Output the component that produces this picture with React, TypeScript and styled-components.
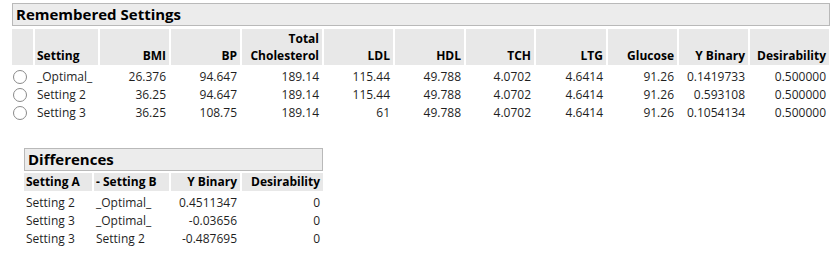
import React from "react";
import styled, { createGlobalStyle } from "styled-components";

const Global = createGlobalStyle`
  html, body { margin: 0; padding: 0; background: #ffffff; }
  body { font-family: "Open Sans", "Noto Sans", "Liberation Sans", sans-serif; font-size: 12px; color: #1a1a1a; }
`;

const Page = styled.div`
  width: 833px;
  height: 254px;
  padding: 3px 0 0 12px;
  box-sizing: border-box;
  display: flex;
  flex-direction: column;
`;

const Section = styled.section<{ $indent?: number; $top?: number }>`
  display: flex;
  flex-direction: column;
  align-self: flex-start;
  margin-left: ${(p) => p.$indent ?? 0}px;
  margin-top: ${(p) => p.$top ?? 0}px;
`;

const TitleBar = styled.div<{ $width: number }>`
  width: ${(p) => p.$width}px;
  box-sizing: border-box;
  height: 23px;
  border: 1px solid #b9b9b9;
  background: #ececec;
  font-weight: 700;
  font-size: 15px;
  line-height: 20px;
  padding-left: 3px;
  color: #000;
`;

const Grid = styled.div<{ $cols: string; $top: number }>`
  display: grid;
  grid-template-columns: ${(p) => p.$cols};
  column-gap: 2px;
  margin-top: ${(p) => p.$top}px;
`;

const HeadCell = styled.div<{ $align?: "left" | "right"; $height: number }>`
  background: #e8e8e8;
  height: ${(p) => p.$height}px;
  display: flex;
  flex-direction: column;
  justify-content: flex-end;
  text-align: ${(p) => p.$align ?? "right"};
  font-weight: 700;
  color: #000;
  line-height: 17px;
  padding: 0 3px 1px 2px;
  white-space: nowrap;
  box-sizing: border-box;
`;

const Cell = styled.div<{ $align?: "left" | "right"; $first?: boolean }>`
  height: 18px;
  line-height: 18px;
  text-align: ${(p) => p.$align ?? "right"};
  padding: 0 3px 0 2px;
  margin-top: ${(p) => (p.$first ? 3 : 0)}px;
  white-space: nowrap;
  color: #1f1f1f;
`;

const RadioCell = styled.div<{ $first?: boolean }>`
  height: 18px;
  display: flex;
  align-items: center;
  padding-left: 1px;
  margin-top: ${(p) => (p.$first ? 3 : 0)}px;
`;

const Radio = styled.span`
  width: 12px;
  height: 12px;
  border: 1px solid #8a8a8a;
  border-radius: 50%;
  background: #fff;
  display: inline-block;
`;

const mainCols = "21px 63px 69px 69px 80px 69px 69px 68px 70px 69px 69px 79px";
const mainHead = [
  { label: "", align: "left" as const },
  { label: "Setting", align: "left" as const },
  { label: "BMI" },
  { label: "BP" },
  { label: "Total\nCholesterol" },
  { label: "LDL" },
  { label: "HDL" },
  { label: "TCH" },
  { label: "LTG" },
  { label: "Glucose" },
  { label: "Y Binary" },
  { label: "Desirability" },
];

const mainRows = [
  ["_Optimal_", "26.376", "94.647", "189.14", "115.44", "49.788", "4.0702", "4.6414", "91.26", "0.1419733", "0.500000"],
  ["Setting 2", "36.25", "94.647", "189.14", "115.44", "49.788", "4.0702", "4.6414", "91.26", "0.593108", "0.500000"],
  ["Setting 3", "36.25", "108.75", "189.14", "61", "49.788", "4.0702", "4.6414", "91.26", "0.1054134", "0.500000"],
];

const diffCols = "68px 75px 69px 81px";
const diffHead = [
  { label: "Setting A", align: "left" as const },
  { label: "- Setting B", align: "left" as const },
  { label: "Y Binary" },
  { label: "Desirability" },
];
const diffRows = [
  ["Setting 2", "_Optimal_", "0.4511347", "0"],
  ["Setting 3", "_Optimal_", "-0.03656", "0"],
  ["Setting 3", "Setting 2", "-0.487695", "0"],
];

export default function App() {
  return (
    <>
      <Global />
      <Page>
        <Section>
          <TitleBar $width={818}>Remembered Settings</TitleBar>
          <Grid $cols={mainCols} $top={3}>
            {mainHead.map((h, i) => (
              <HeadCell key={i} $align={h.align} $height={36}>
                {h.label.split("\n").map((l, j) => (
                  <span key={j}>{l}</span>
                ))}
              </HeadCell>
            ))}
            {mainRows.map((r, ri) => (
              <React.Fragment key={ri}>
                <RadioCell $first={ri === 0}>
                  <Radio />
                </RadioCell>
                {r.map((v, ci) => (
                  <Cell key={ci} $first={ri === 0} $align={ci === 0 ? "left" : "right"}>
                    {v}
                  </Cell>
                ))}
              </React.Fragment>
            ))}
          </Grid>
        </Section>
        <Section $indent={12} $top={26}>
          <TitleBar $width={299}>Differences</TitleBar>
          <Grid $cols={diffCols} $top={2}>
            {diffHead.map((h, i) => (
              <HeadCell key={i} $align={h.align} $height={18}>
                <span>{h.label}</span>
              </HeadCell>
            ))}
            {diffRows.map((r, ri) => (
              <React.Fragment key={ri}>
                {r.map((v, ci) => (
                  <Cell key={ci} $first={ri === 0} $align={ci < 2 ? "left" : "right"}>
                    {v}
                  </Cell>
                ))}
              </React.Fragment>
            ))}
          </Grid>
        </Section>
      </Page>
    </>
  );
}
